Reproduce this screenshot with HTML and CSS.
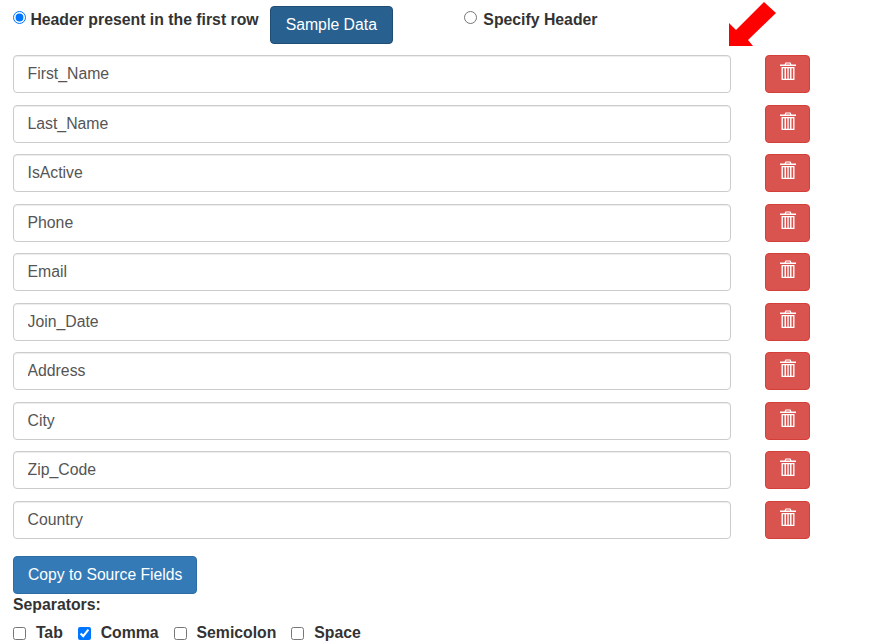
FILE: index.html
```html
<!DOCTYPE html>
<html lang="en">
<head>
    <meta charset="UTF-8">
    <meta name="viewport" content="width=device-width, initial-scale=1.0">
    <title>Header Fields</title>
    <link rel="stylesheet" href="styles.css">
</head>
<body>
    <svg class="arrow" width="60" height="50" viewBox="0 0 60 50">
        <polygon fill="#ff0000" points="9,23 9,46 33,46 28,40 56,13 44,2 16,30"/>
    </svg>

    <svg width="0" height="0" class="defs">
        <symbol id="trash" viewBox="0 0 16 18">
            <path fill="#fff" d="M5.500 0.500h5l1 2H16v1.600H0V2.500h4.500zM6.300 1.500l-.4 1h4.200l-.4-1z"/>
            <path fill="#fff" fill-rule="evenodd" d="M1.500 5h13v13h-13zM2.900 6.200v10.600h1.600V6.200zM6 6.200v10.600h1.400V6.200zM8.700 6.200v10.600h1.400V6.200zM11.500 6.200v10.600h1.600V6.200z"/>
        </symbol>
    </svg>

    <div class="header-row">
        <label class="radio-label first"><input type="radio" name="header" checked> Header present in the first row</label>
        <button class="btn btn-dark">Sample Data</button>
        <label class="radio-label second"><input type="radio" name="header"> Specify Header</label>
    </div>

    <div class="fields">
        <div class="field"><input class="text-input" type="text" value="First_Name"><button class="btn-del"><svg width="16" height="18"><use href="#trash"/></svg></button></div>
        <div class="field"><input class="text-input" type="text" value="Last_Name"><button class="btn-del"><svg width="16" height="18"><use href="#trash"/></svg></button></div>
        <div class="field"><input class="text-input" type="text" value="IsActive"><button class="btn-del"><svg width="16" height="18"><use href="#trash"/></svg></button></div>
        <div class="field"><input class="text-input" type="text" value="Phone"><button class="btn-del"><svg width="16" height="18"><use href="#trash"/></svg></button></div>
        <div class="field"><input class="text-input" type="text" value="Email"><button class="btn-del"><svg width="16" height="18"><use href="#trash"/></svg></button></div>
        <div class="field"><input class="text-input" type="text" value="Join_Date"><button class="btn-del"><svg width="16" height="18"><use href="#trash"/></svg></button></div>
        <div class="field"><input class="text-input" type="text" value="Address"><button class="btn-del"><svg width="16" height="18"><use href="#trash"/></svg></button></div>
        <div class="field"><input class="text-input" type="text" value="City"><button class="btn-del"><svg width="16" height="18"><use href="#trash"/></svg></button></div>
        <div class="field"><input class="text-input" type="text" value="Zip_Code"><button class="btn-del"><svg width="16" height="18"><use href="#trash"/></svg></button></div>
        <div class="field"><input class="text-input" type="text" value="Country"><button class="btn-del"><svg width="16" height="18"><use href="#trash"/></svg></button></div>
    </div>

    <button class="btn btn-primary">Copy to Source Fields</button>

    <div class="sep-title">Separators:</div>
    <div class="separators">
        <label class="check"><input type="checkbox"> Tab</label>
        <label class="check"><input type="checkbox" checked> Comma</label>
        <label class="check"><input type="checkbox"> Semicolon</label>
        <label class="check"><input type="checkbox"> Space</label>
    </div>
</body>
</html>
```

FILE: styles.css
```css
html, body {
    height: 644px;
    overflow: hidden;
}
body {
    margin: 0;
    padding: 6px 0 0 13px;
    box-sizing: border-box;
    position: relative;
    background: #fff;
    color: #333;
    font-family: "Liberation Sans", Arial, sans-serif;
    font-size: 15.8px;
}
.defs {
    position: absolute;
}
.arrow {
    position: absolute;
    left: 720px;
    top: 0;
}
.header-row {
    display: flex;
    align-items: flex-start;
    height: 38px;
}
.radio-label {
    font-weight: bold;
    line-height: 22px;
    margin-top: 3px;
    white-space: nowrap;
}
.radio-label input {
    margin: 0;
    width: 13px;
    height: 13px;
    vertical-align: 1px;
}
.radio-label.first {
    margin-right: 11px;
}
.radio-label.second {
    margin-left: 71px;
}
.radio-label.second input {
    margin-right: 2px;
}
.btn {
    font-family: inherit;
    font-size: 15.8px;
    color: #fff;
    border-radius: 4px;
    border: 1px solid transparent;
    height: 38px;
    padding: 0 15px;
    cursor: pointer;
}
.btn-dark {
    background: #286090;
    border-color: #204d74;
}
.btn-primary {
    background: #337ab7;
    border-color: #2e6da4;
    display: block;
    font-size: 15.7px;
    padding: 0 14px;
}
.fields {
    display: flex;
    flex-direction: column;
    gap: 11.5px;
    margin-top: 11px;
    margin-bottom: 17px;
}
.field {
    display: flex;
    gap: 34px;
}
.text-input {
    width: 718px;
    height: 38px;
    box-sizing: border-box;
    padding: 0 13.5px;
    font-family: inherit;
    font-size: 15.8px;
    color: #555;
    background: #fff;
    border: 1px solid #ccc;
    border-radius: 4px;
    box-shadow: inset 0 1px 1px rgba(0, 0, 0, 0.075);
}
.btn-del {
    width: 45px;
    height: 38px;
    padding: 0 0 3px;
    background: #d9534f;
    border: 1px solid #d43f3a;
    border-radius: 4px;
    cursor: pointer;
}
.sep-title {
    font-weight: bold;
    line-height: 20px;
    margin-top: 1px;
}
.separators {
    display: flex;
    gap: 15px;
    margin-top: 8px;
}
.check {
    font-weight: bold;
    line-height: 20px;
    white-space: nowrap;
}
.check input {
    width: 13px;
    height: 13px;
    margin: 0 5.5px 0 0;
    vertical-align: -2px;
}
```
